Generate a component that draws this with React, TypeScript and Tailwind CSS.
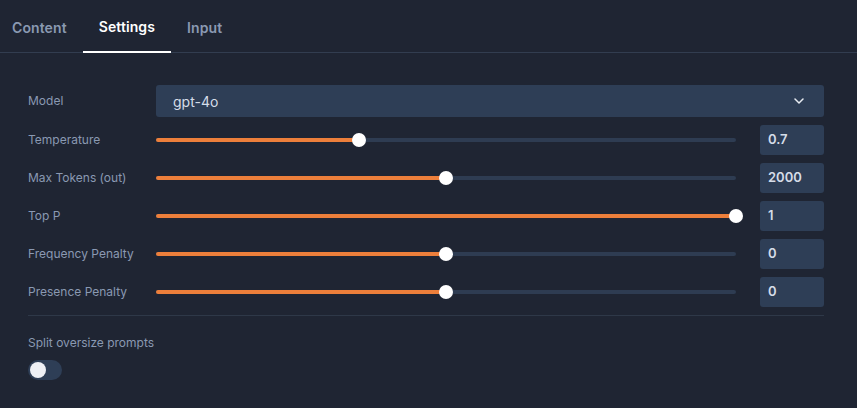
import React from "react";

const rows = [
  { label: "Temperature", pct: 35, value: "0.7" },
  { label: "Max Tokens (out)", pct: 50, value: "2000" },
  { label: "Top P", pct: 100, value: "1" },
  { label: "Frequency Penalty", pct: 50, value: "0" },
  { label: "Presence Penalty", pct: 50, value: "0" },
];

function Slider({ pct }: { pct: number }) {
  return (
    <div className="relative flex-1 h-[30px] flex items-center">
      <div className="relative w-full h-[4px] rounded-full bg-[#2e3c52]">
        <div className="absolute left-0 top-0 h-full rounded-full bg-[#ed7f3b]" style={{ width: `${pct}%` }} />
        <div
          className="absolute top-1/2 w-[14px] h-[14px] -ml-[7px] -mt-[7px] rounded-full bg-white"
          style={{ left: `${pct}%` }}
        />
      </div>
    </div>
  );
}

export default function App() {
  return (
    <div
      className="w-[857px] h-[408px] bg-[#1f2533] overflow-hidden"
      style={{ fontFamily: "Inter, 'Noto Sans', sans-serif" }}
    >
      <div className="flex h-[53px] border-b border-[#323d50]">
        <div className="flex -ml-[4px]">
          <div className="px-4 pt-[2px] flex items-center h-[53px] text-[14px] tracking-[0.1px] font-semibold text-[#8a99b2]">Content</div>
          <div className="px-4 pt-[2px] flex items-center h-[53px] text-[14px] tracking-[0.1px] font-semibold text-white border-b-2 border-white mb-[-1px]">
            Settings
          </div>
          <div className="px-4 pt-[2px] flex items-center h-[53px] text-[14px] tracking-[0.1px] font-semibold text-[#8a99b2]">Input</div>
        </div>
      </div>

      <div className="pl-[28px] pr-[33px] pt-[32px]">
        <div className="flex items-center h-[32px] mb-[8px]">
          <div className="w-[128px] text-[12px] text-[#8a99b2]">Model</div>
          <div className="flex-1 h-[32px] rounded-[3px] bg-[#2e3e56] flex items-center justify-between pl-[17px] pr-[20px]">
            <span className="text-[14px] text-[#d5dce8]">gpt-4o</span>
            <svg width="10" height="6" viewBox="0 0 10 6" fill="none">
              <path d="M1 1l4 4 4-4" stroke="#e8ecf2" strokeWidth="1.5" strokeLinecap="round" strokeLinejoin="round" />
            </svg>
          </div>
        </div>

        <div className="flex flex-col gap-[8px]">
          {rows.map((r) => (
            <div key={r.label} className="flex items-center h-[30px]">
              <div className="w-[128px] text-[12px] text-[#8a99b2]">{r.label}</div>
              <Slider pct={r.pct} />
              <div className="ml-[24px] w-[64px] h-[30px] rounded-[3px] bg-[#2e3e56] flex items-center pl-[8px] text-[13px] font-semibold text-[#d5dce8]">
                {r.value}
              </div>
            </div>
          ))}
        </div>

        <div className="mt-[8px] h-px bg-[#2e3848]" />

        <div className="mt-[18px] text-[12px] text-[#8a99b2] leading-[18px]">Split oversize prompts</div>
        <div className="mt-[8px] w-[34px] h-[20px] rounded-full bg-[#2e3e56] p-[2px]">
          <div className="w-[16px] h-[16px] rounded-full bg-[#eef0f5]" />
        </div>
      </div>
    </div>
  );
}
